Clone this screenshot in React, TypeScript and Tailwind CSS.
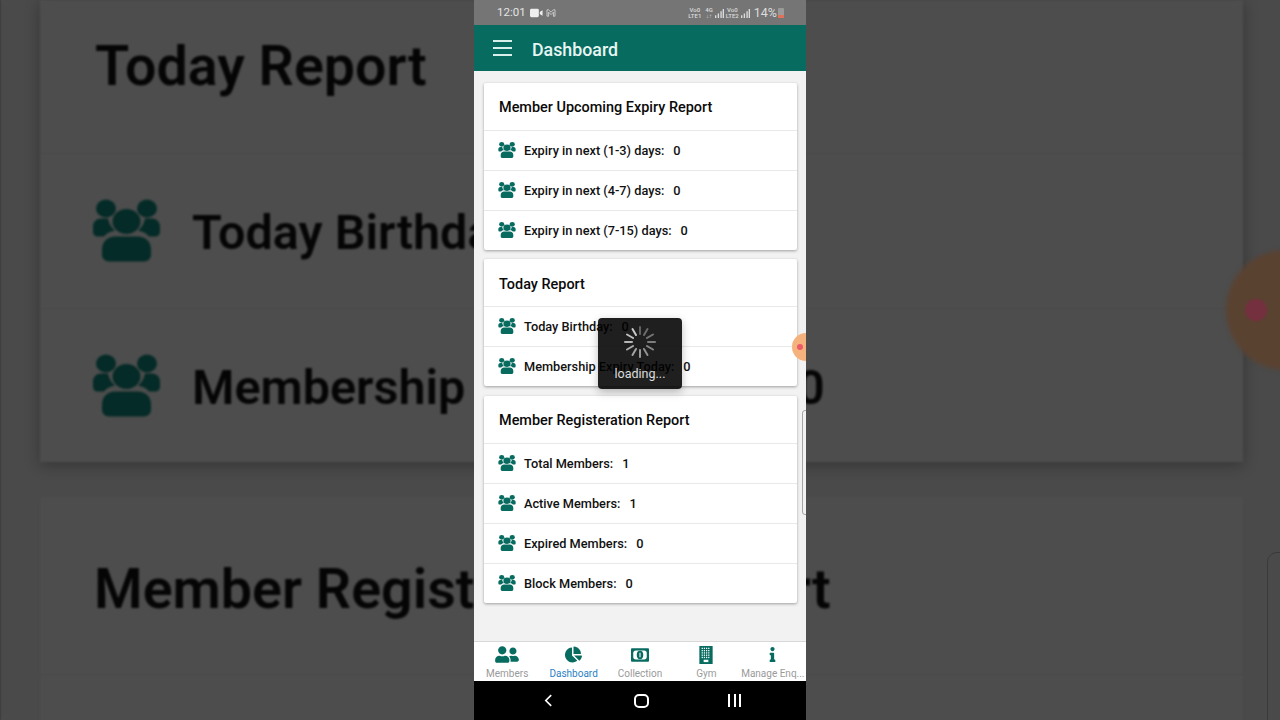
import { FaChartPie, FaInfo, FaUserFriends } from "react-icons/fa";

const sections = [
    {
        title: "Member Upcoming Expiry Report",
        rows: [
            { label: "Expiry in next (1-3) days:", value: "0" },
            { label: "Expiry in next (4-7) days:", value: "0" },
            { label: "Expiry in next (7-15) days:", value: "0" },
        ],
    },
    {
        title: "Today Report",
        rows: [
            { label: "Today Birthday:", value: "0" },
            { label: "Membership Expiry Today:", value: "0" },
        ],
    },
    {
        title: "Member Registeration Report",
        rows: [
            { label: "Total Members:", value: "1" },
            { label: "Active Members:", value: "1" },
            { label: "Expired Members:", value: "0" },
            { label: "Block Members:", value: "0" },
        ],
    },
];

function GroupIcon({ className }: { className: string }) {
    return (
        <svg viewBox="0 0 67 62" className={className} fill="currentColor">
            <ellipse cx="13" cy="9" rx="10" ry="9" />
            <ellipse cx="54" cy="9" rx="10" ry="9" />
            <path d="M0 27c0-5 4-8 8-8h7c1 5 3 9 7 12-5 1-9 3-11 6H5c-3 0-5-2-5-5z" />
            <path d="M67 27c0-5-4-8-8-8h-7c-1 5-3 9-7 12 5 1 9 3 11 6h6c3 0 5-2 5-5z" />
            <ellipse cx="33.5" cy="22" rx="14" ry="12.5" />
            <path d="M9 50c0-8 6-13 13-13h23c7 0 13 5 13 13v5c0 4-3 7-7 7H16c-4 0-7-3-7-7z" />
        </svg>
    );
}

function ReportCard({ title, rows }: (typeof sections)[number]) {
    return (
        <div className="bg-white rounded-[2px] shadow-[0_1px_3px_rgba(0,0,0,0.35)]">
            <div className="h-[47px] flex items-center pl-[15px] pt-[4px] text-[14.45px] font-medium text-[#0a0a0a]">
                {title}
            </div>
            {rows.map((row) => (
                <div
                    key={row.label}
                    className="h-10 border-t border-[#e9e9e9] flex items-center pl-[14px] pt-[1px] text-[12.75px] font-medium text-[#111111]"
                >
                    <GroupIcon className="w-[18px] h-[16px] text-[#076b60] mr-[8px] -mt-0.5" />
                    <span>{row.label}</span>
                    <span className="ml-[9px]">{row.value}</span>
                </div>
            ))}
        </div>
    );
}

function BackgroundRow({ label, value }: { label: string; value?: string }) {
    return (
        <div className="h-[155px] border-t border-[#484848] flex items-center pl-[53px] pt-[4px] text-[48.5px] font-semibold text-[#050505] whitespace-nowrap">
            <GroupIcon className="w-[67px] h-[63px] text-[#042b27] mr-[32px] -mt-[6px]" />
            <span>{label}</span>
            {value && <span className="ml-[31px]">{value}</span>}
        </div>
    );
}

function SignalBars() {
    return (
        <svg viewBox="0 0 10 10" className="w-[9px] h-[9px]" fill="#dcdcdc">
            <rect x="0" y="7" width="1.5" height="3" />
            <rect x="3" y="5" width="1.5" height="5" />
            <rect x="6" y="2.5" width="1.5" height="7.5" />
            <rect x="8.5" y="0" width="1.5" height="10" />
        </svg>
    );
}

function StatusBar() {
    return (
        <div className="h-[25px] bg-[#757575] flex items-center pl-[23px] pr-[22px] pt-px text-[#e4e4e4] text-[11.5px]">
            <span>12:01</span>
            <svg viewBox="0 0 14 10" className="w-[13px] h-[10px] ml-[4px]" fill="#efefef">
                <rect x="0" y="0.5" width="9.5" height="9" rx="1.5" />
                <path d="M10.5 4l3-2v6l-3-2z" />
            </svg>
            <svg viewBox="0 0 12 10" className="w-[10px] h-[8px] ml-[3px]" fill="none" stroke="#dddddd">
                <path d="M1 1h2l3 3 3-3h2v8H9V4L6 7 3 4v5H1z" />
            </svg>
            <div className="ml-auto flex items-center gap-[2px] text-[#dcdcdc]">
                <div className="text-[6px] leading-[6px] text-center font-medium">
                    <div>Vo0</div>
                    <div>LTE1</div>
                </div>
                <div className="text-[6px] leading-[6px] text-center font-medium ml-[2px]">
                    <div>4G</div>
                    <div>↓↑</div>
                </div>
                <SignalBars />
                <div className="text-[6px] leading-[6px] text-center font-medium">
                    <div>Vo0</div>
                    <div>LTE2</div>
                </div>
                <SignalBars />
                <span className="text-[12.5px] ml-[2px]">14%</span>
                <div className="w-[6px] h-[10px] -ml-[1px] rounded-[1px] bg-[#9a9a9a] flex items-end">
                    <div className="w-full h-[3px] bg-[#e2715a] rounded-b-[1px]"></div>
                </div>
            </div>
        </div>
    );
}

function MoneyIcon() {
    return (
        <svg viewBox="0 0 20 15" className="w-[18px] h-[14px]">
            <rect width="20" height="15" rx="1" fill="#076b60" />
            <rect x="2.5" y="2.5" width="15" height="10" rx="3" fill="#ffffff" />
            <ellipse cx="10" cy="7.5" rx="3.6" ry="4.6" fill="#076b60" />
            <rect x="9.4" y="5" width="1.2" height="5" fill="#ffffff" />
        </svg>
    );
}

function GymIcon() {
    const dots = [];
    for (let r = 0; r < 5; r++) {
        for (let c = 0; c < 4; c++) {
            dots.push(<rect key={`${r}-${c}`} x={2.4 + c * 2.3} y={1.8 + r * 2.4} width="1.3" height="1.4" fill="#ffffff" />);
        }
    }
    return (
        <svg viewBox="0 0 14 19" className="w-[14px] h-[18px]">
            <rect width="14" height="19" fill="#076b60" />
            {dots}
            <rect x="4.5" y="14.5" width="5" height="2.5" fill="#ffffff" />
        </svg>
    );
}

function NavItem({
    label,
    active,
    children,
}: {
    label: string;
    active?: boolean;
    children: React.ReactNode;
}) {
    return (
        <div className="flex-1 min-w-0 flex flex-col items-center">
            <div className="h-[23px] flex items-center justify-center text-[#076b60]">
                {children}
            </div>
            <span
                className={
                    active
                        ? "text-[10px] leading-[12px] mt-[2px] text-[#2a82c4]"
                        : "text-[10px] leading-[12px] mt-[2px] text-[#9a9a9a] whitespace-nowrap"
                }
            >
                {label}
            </span>
        </div>
    );
}

function Spinner() {
    const ticks = [0, 30, 60, 90, 120, 150, 180, 210, 240, 270, 300, 330];
    return (
        <svg viewBox="-16 -16 32 32" className="w-8 h-8">
            {ticks.map((deg, i) => (
                <line
                    key={deg}
                    x1="0"
                    y1="-8"
                    x2="0"
                    y2="-15"
                    stroke="#ffffff"
                    strokeOpacity={0.3 + (i / 12) * 0.5}
                    strokeWidth="2"
                    strokeLinecap="round"
                    transform={`rotate(${deg})`}
                />
            ))}
        </svg>
    );
}

export default function App() {
    return (
        <div className="relative w-[1280px] h-[720px] overflow-hidden bg-[#4a4a4a] font-['Roboto',sans-serif]">
            {/* blurred, enlarged copy of the video behind the phone */}
            <div className="h-full pl-[40px] pr-[37px] border-l-2 border-[#2b2b2b] -ml-[2px] blur-[1px]">
                <div className="h-[462px] bg-[#4d4d4d] shadow-[0_3px_14px_rgba(0,0,0,0.3)]">
                    <div className="h-[153px] flex items-center pl-[55px] pb-[20px] text-[55.6px] font-semibold text-[#050505]">
                        Today Report
                    </div>
                    <BackgroundRow label="Today Birthday:" value="0" />
                    <BackgroundRow label="Membership Expiry Today:" value="0" />
                </div>
                <div className="mt-[35px] h-[300px] bg-[#4d4d4d]">
                    <div className="h-[177px] flex items-center pl-[54px] pt-[9px] text-[55.6px] font-semibold text-[#050505] whitespace-nowrap">
                        Member Registeration Report
                    </div>
                    <div className="border-t border-[#484848]"></div>
                </div>
            </div>
            <div className="absolute left-[1226px] top-[250px] w-[120px] h-[120px] rounded-full bg-[#5a4231] blur-[2px]"></div>
            <div className="absolute left-[1245px] top-[299px] w-[22px] h-[22px] rounded-full bg-[#75303f] blur-[1px]"></div>
            <div className="absolute left-[1267px] top-[552px] w-[30px] h-[200px] rounded-[10px] border border-[#3a3a3a]"></div>

            {/* phone */}
            <div className="absolute left-[474px] top-0 w-[332px] h-[720px] flex flex-col overflow-hidden bg-[#f2f2f2]">
                <StatusBar />
                <div className="h-[46px] bg-[#076b60] flex items-center pl-[19px] text-white">
                    <div className="flex flex-col gap-[5px] w-[19px] -mt-[1px]">
                        <div className="h-[2px] bg-[#d9efeb]"></div>
                        <div className="h-[2px] bg-[#d9efeb]"></div>
                        <div className="h-[2px] bg-[#d9efeb]"></div>
                    </div>
                    <span className="ml-[20px] mt-[4px] text-[17.8px] font-medium text-[#e8f6f3]">Dashboard</span>
                </div>
                <div className="flex-1 flex flex-col gap-[9.5px] pt-[11.5px] pl-[10px] pr-[9px]">
                    {sections.map((s) => (
                        <ReportCard key={s.title} title={s.title} rows={s.rows} />
                    ))}
                </div>
                <div className="h-[40px] bg-white border-t border-[#d8d8d8] flex pt-[1px]">
                    <NavItem label="Members">
                        <FaUserFriends className="w-[24px] h-[19px]" />
                    </NavItem>
                    <NavItem label="Dashboard" active>
                        <FaChartPie className="w-[17px] h-[17px]" />
                    </NavItem>
                    <NavItem label="Collection">
                        <MoneyIcon />
                    </NavItem>
                    <NavItem label="Gym">
                        <GymIcon />
                    </NavItem>
                    <NavItem label="Manage Enq...">
                        <FaInfo className="w-[9px] h-[15px]" />
                    </NavItem>
                </div>
                <div className="h-[39px] bg-black flex items-center text-white">
                    <svg viewBox="0 0 10 14" className="w-[9px] h-[13px] ml-[70px]" fill="none" stroke="#ffffff" strokeWidth="1.8">
                        <path d="M8 1L2 7l6 6" />
                    </svg>
                    <div className="w-[15px] h-[14px] ml-[81px] rounded-[5px] border-2 border-white"></div>
                    <div className="ml-[79px] flex gap-[3.5px]">
                        <div className="w-[2px] h-[13px] bg-white"></div>
                        <div className="w-[2px] h-[13px] bg-white"></div>
                        <div className="w-[2px] h-[13px] bg-white"></div>
                    </div>
                </div>
            </div>

            {/* floating assistant bubble and edge handle */}
            <div className="absolute left-[474px] top-0 w-[332px] h-[720px] overflow-hidden pointer-events-none">
                <div className="absolute left-[318px] top-[333px] w-[28px] h-[28px] rounded-full bg-[#f5b27d]"></div>
                <div className="absolute left-[323px] top-[344px] w-[6px] h-[6px] rounded-full bg-[#ea5a6a]"></div>
                <div className="absolute left-[328px] top-[410px] w-[10px] h-[105px] rounded-[3px] border border-[#a5a5a5]"></div>
            </div>

            {/* loading toast, see-through so the rows stay faintly visible */}
            <div className="absolute left-[598px] top-[318px] w-[84px] h-[71px] rounded-[4px] bg-black/88 shadow-[0_3px_8px_rgba(0,0,0,0.25)] flex flex-col items-center pt-[8px] text-[12.5px] text-[#dddddd]">
                <Spinner />
                <span className="mt-[8px] leading-[16px]">loading...</span>
            </div>
        </div>
    );
}
